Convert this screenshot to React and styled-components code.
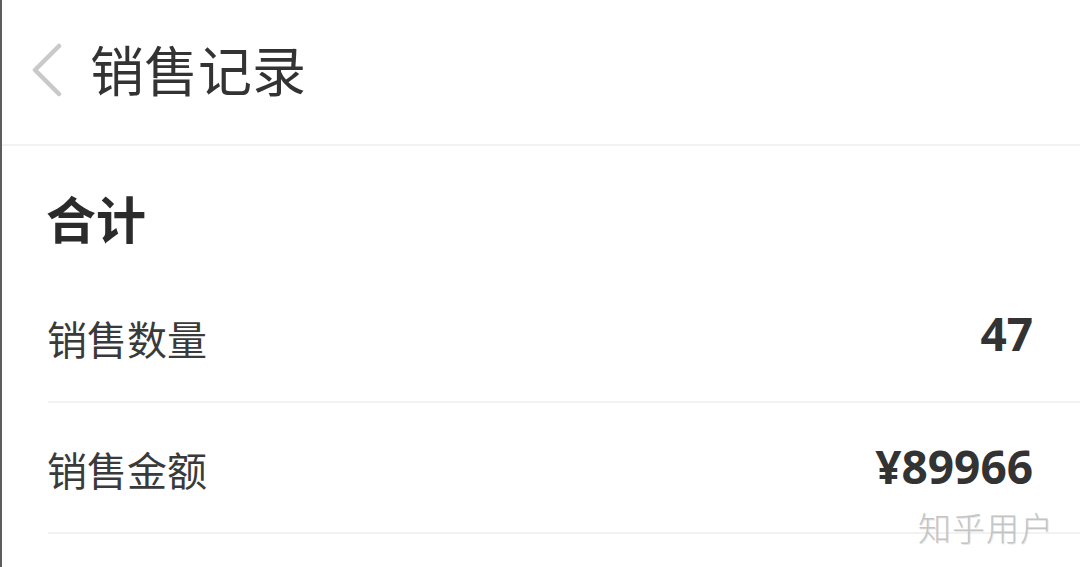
import React from "react";
import styled, { createGlobalStyle } from "styled-components";

const Global = createGlobalStyle`
  html, body { margin: 0; padding: 0; background: #fff; }
  body { font-family: "Noto Sans CJK SC", "Noto Sans", sans-serif; }
`;

const Page = styled.div`
  position: relative;
  width: 1080px;
  height: 567px;
  box-sizing: border-box;
  border-left: 2px solid #5c5c5c;
  background: #fff;
  overflow: hidden;
`;

const Header = styled.header`
  height: 144px;
  display: flex;
  align-items: center;
  padding-left: 28px;
  border-bottom: 2px solid #f2f2f2;
  box-sizing: content-box;
`;

const BackButton = styled.button`
  border: 0;
  background: none;
  padding: 0;
  width: 34px;
  height: 54px;
  display: flex;
  align-items: center;
  margin-right: 26px;
  margin-top: -4px;
`;

const Title = styled.h1`
  margin: 0;
  font-size: 54px;
  font-weight: 400;
  color: #333;
  line-height: 1;
  margin-top: -6px;
`;

const Section = styled.section`
  display: flex;
  flex-direction: column;
`;

const SectionTitle = styled.h2`
  margin: 0;
  height: 125px;
  box-sizing: border-box;
  padding: 46px 0 0 44px;
  font-size: 50px;
  line-height: 50px;
  font-weight: 700;
  color: #2b2b2b;
`;

const Row = styled.div`
  margin-left: 46px;
  padding-right: 47px;
  height: ${(p) => p.$h}px;
  display: flex;
  align-items: center;
  justify-content: space-between;
  border-bottom: 2px solid #f2f2f2;
`;

const Label = styled.span`
  font-size: 40px;
  color: #3a3a3a;
  margin-left: -1px;
  margin-top: ${(p) => p.$shift || 0}px;
`;

const Value = styled.span`
  font-family: "Open Sans", "Noto Sans", sans-serif;
  font-weight: 700;
  font-size: 46px;
  color: #333;
  margin-top: ${(p) => p.$shift || 0}px;
`;

const Watermark = styled.div`
  position: absolute;
  right: 26px;
  bottom: 16px;
  font-size: 33px;
  font-weight: 300;
  color: #c4c4c4;
  letter-spacing: 1px;
  text-shadow: 1px 1px 0 #8a8a8a33;
`;

export default function App() {
  return (
    <>
      <Global />
      <Page>
        <Header>
          <BackButton aria-label="返回">
            <svg width="34" height="54" viewBox="0 0 34 54">
              <polyline
                points="29,3 5,27 29,51"
                fill="none"
                stroke="#c9c9c9"
                strokeWidth="4.5"
                strokeLinecap="round"
                strokeLinejoin="round"
              />
            </svg>
          </BackButton>
          <Title>销售记录</Title>
        </Header>
        <Section>
          <SectionTitle>合计</SectionTitle>
          <Row $h={130}>
            <Label $shift={4}>销售数量</Label>
            <Value $shift={-6}>47</Value>
          </Row>
          <Row $h={129}>
            <Label $shift={3}>销售金额</Label>
            <Value $shift={-4}>¥89966</Value>
          </Row>
        </Section>
        <Watermark>知乎用户</Watermark>
      </Page>
    </>
  );
}
